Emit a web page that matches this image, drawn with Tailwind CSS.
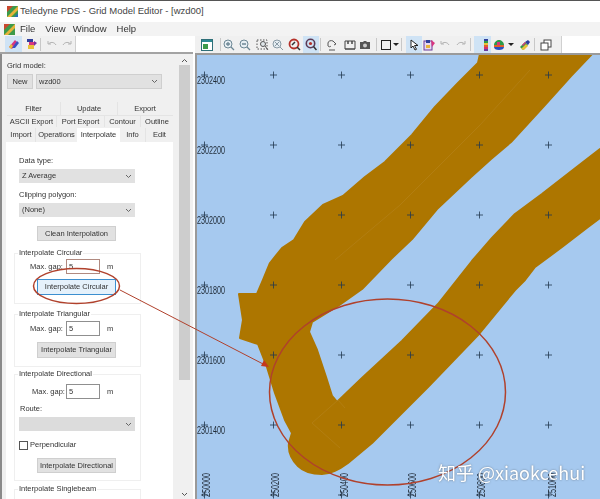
<!DOCTYPE html>
<html lang="en">
<head>
    <meta charset="UTF-8">
    <title>Teledyne PDS - Grid Model Editor - [wzd00]</title>
    <script src="https://cdn.jsdelivr.net/npm/@tailwindcss/browser@4"></script>
</head>
<body class="bg-white overflow-hidden">
<div class="relative w-[600px] h-[499px] overflow-hidden font-['Liberation_Sans',sans-serif] text-[#333] whitespace-nowrap blur-[0.35px]">

    <!-- Title bar -->
    <div class="h-[22px] bg-white border-t border-[#555] flex items-center pl-[7px] gap-[2px] text-[9.5px] text-[#444]">
        <svg class="w-[11px] h-[11px]" viewBox="0 0 11 11"><rect width="11" height="11" fill="#3c9a4a"/><path d="M0 11 11 0v4L4 11z" fill="#e8b33a"/><path d="M0 6 6 0H0z" fill="#c9482e"/><path d="M7 11l4-4v4z" fill="#2a6fb5"/></svg>
        <span>Teledyne PDS - Grid Model Editor - [wzd00]</span>
    </div>

    <!-- Menu -->
    <div class="h-[14px] bg-[#f3f3f3] flex items-center pl-[4px] text-[9.5px] text-[#333]">
        <svg class="w-[11px] h-[11px]" viewBox="0 0 11 11"><rect width="11" height="11" fill="#3c9a4a"/><path d="M0 11 11 0v4L4 11z" fill="#e8b33a"/><path d="M0 6 6 0H0z" fill="#c9482e"/></svg>
        <span class="ml-[5px]">File</span>
        <span class="ml-[10px]">View</span>
        <span class="ml-[7px]">Window</span>
        <span class="ml-[10px]">Help</span>
    </div>

    <div class="flex h-[463px]">
        <!-- Left side -->
        <div class="w-[193px] shrink-0 flex flex-col">
            <div class="h-[16px] bg-white border-b-2 border-[#a3a3a3] box-content flex items-center">
                <div class="flex items-center h-[16px] w-[76px] bg-[#f0f0f0] border-r border-[#d0d0d0]">
                    <div class="ml-[5px] w-[17px] h-[16px] bg-[#cfe3f5] flex items-center justify-center">
                        <svg class="w-[12px] h-[12px]" viewBox="0 0 12 12"><path d="M1 9 7 2l2 2-5 7z" fill="#d8357f"/><path d="M4 10l5-7 2 2-4 5z" fill="#3a4fc0"/><path d="M1 9l2-3 2 2-2 3z" fill="#e9b93a"/></svg>
                    </div>
                    <svg class="ml-[4px] w-[12px] h-[12px]" viewBox="0 0 12 12"><path d="M1 1h6v3H1z" fill="#2f3f9c"/><path d="M3 4h6v3H3z" fill="#d8357f"/><path d="M2 7h6v4H2z" fill="#e8c13a"/><path d="M8 3l3 2-3 3z" fill="#7a2f9c"/></svg>
                    <div class="ml-[2px] w-px h-[13px] bg-[#c8c8c8]"></div>
                    <svg class="ml-[6px] w-[10px] h-[9px]" viewBox="0 0 10 9" fill="none" stroke="#b4b4b4"><path d="M1 1v3h3M1.500 4C3 2 7 1.500 9 5"/></svg>
                    <svg class="ml-[5px] w-[10px] h-[9px]" viewBox="0 0 10 9" fill="none" stroke="#b4b4b4"><path d="M9 1v3H6M8.500 4C7 2 3 1.500 1 5"/></svg>
                </div>
            </div>

            <!-- Panel with scrollbar -->
            <div class="relative flex-1 bg-[#f0f0f0] border-l-2 border-[#8a8a8a] overflow-hidden pl-[5px]">
                <div class="pt-[6px] text-[7.5px] leading-[12px]">Grid model:</div>
                <div class="flex gap-[3px] mt-[2px] text-[7.5px]">
                    <button class="w-[26px] h-[15px] bg-[#e1e1e1] border border-[#cfcfcf]">New</button>
                    <div class="w-[126px] h-[15px] bg-[#e1e1e1] border border-[#cfcfcf] flex items-center justify-between px-[2px]">
                        <span>wzd00</span>
                        <svg class="w-[7px] h-[5px] mr-[1px]" viewBox="0 0 7 5" fill="none" stroke="#666"><path d="M1 1l2.500 2.500L6 1"/></svg>
                    </div>
                </div>

                <!-- Tabs -->
                <div class="w-[166px] mt-[13px] text-[7.5px] leading-[13px] text-center">
                    <div class="flex h-[13px] border-b border-[#e4e4e4] box-content">
                        <span class="w-[54px] border-r border-[#e4e4e4]">Filter</span>
                        <span class="w-[57px] border-r border-[#e4e4e4]">Update</span>
                        <span class="w-[54px]">Export</span>
                    </div>
                    <div class="flex h-[12px] -mt-px">
                        <span class="w-[50px] border-r border-[#e4e4e4]">ASCII Export</span>
                        <span class="w-[48px] border-r border-[#e4e4e4]">Port Export</span>
                        <span class="w-[36px] border-r border-[#e4e4e4]">Contour</span>
                        <span class="w-[32px]">Outline</span>
                    </div>
                    <div class="flex h-[14px] mt-[1px]">
                        <span class="w-[29px] border-r border-[#e4e4e4]">Import</span>
                        <span class="w-[41px]">Operations</span>
                        <span class="w-[43px] bg-white">Interpolate</span>
                        <span class="w-[26px] border-r border-[#e4e4e4]">Info</span>
                        <span class="w-[27px]">Edit</span>
                    </div>
                </div>

                <!-- Interpolate tab -->
                <div class="w-[167px] -ml-px bg-white h-[360px] text-[7.5px] leading-[12px] pt-[13px] pl-[8px]">
                    <div class="pl-[5px]">
                        <div>Data type:</div>
                        <div class="w-[116px] h-[14px] mt-[2px] bg-[#e1e1e1] flex items-center justify-between px-[3px]">
                            <span>Z Average</span>
                            <svg class="w-[7px] h-[5px]" viewBox="0 0 7 5" fill="none" stroke="#666"><path d="M1 1l2.500 2.500L6 1"/></svg>
                        </div>
                        <div class="mt-[6px]">Clipping polygon:</div>
                        <div class="w-[116px] h-[14px] mt-[2px] bg-[#e1e1e1] flex items-center justify-between px-[3px]">
                            <span>(None)</span>
                            <svg class="w-[7px] h-[5px]" viewBox="0 0 7 5" fill="none" stroke="#666"><path d="M1 1l2.500 2.500L6 1"/></svg>
                        </div>
                        <button class="block w-[79px] h-[15px] ml-[18px] mt-[9px] bg-[#e1e1e1] border border-[#cfcfcf]">Clean Interpolation</button>
                    </div>

                    <fieldset class="w-[127px] h-[57px] mt-[6px] border border-[#efefef]">
                        <legend class="ml-[3px] px-[1px]">Interpolate Circular</legend>
                        <div class="flex items-center h-[15px] pl-[15px]">
                            <span class="w-[36px]">Max. gap:</span>
                            <div class="w-[34px] h-[15px] border border-[#b08a80] pl-[2px] leading-[13px]">5</div>
                            <span class="ml-[7px]">m</span>
                        </div>
                        <button class="block w-[79px] h-[16px] ml-[22px] mt-[5px] bg-[#e5f1fb] border border-[#3c8fd0]">Interpolate Circular</button>
                    </fieldset>

                    <fieldset class="w-[127px] h-[59px] mt-[4px] border border-[#efefef]">
                        <legend class="ml-[3px] px-[1px]">Interpolate Triangular</legend>
                        <div class="flex items-center h-[15px] mt-[1px] pl-[15px]">
                            <span class="w-[36px]">Max. gap:</span>
                            <div class="w-[34px] h-[15px] border border-[#8f8f8f] pl-[2px] leading-[13px]">5</div>
                            <span class="ml-[7px]">m</span>
                        </div>
                        <button class="block w-[79px] h-[16px] ml-[22px] mt-[6px] bg-[#e1e1e1] border border-[#cfcfcf]">Interpolate Triangular</button>
                    </fieldset>

                    <fieldset class="w-[127px] h-[113px] mt-[1px] border border-[#efefef]">
                        <legend class="ml-[3px] px-[1px]">Interpolate Directional</legend>
                        <div class="flex items-center h-[15px] mt-[4px] pl-[17px]">
                            <span class="w-[34px]">Max. gap:</span>
                            <div class="w-[34px] h-[15px] border border-[#8f8f8f] pl-[2px] leading-[13px]">5</div>
                            <span class="ml-[7px]">m</span>
                        </div>
                        <div class="mt-[4px] pl-[5px]">Route:</div>
                        <div class="w-[116px] h-[14px] mt-[2px] ml-[4px] bg-[#dcdcdc] flex items-center justify-end px-[3px]">
                            <svg class="w-[7px] h-[5px]" viewBox="0 0 7 5" fill="none" stroke="#666"><path d="M1 1l2.500 2.500L6 1"/></svg>
                        </div>
                        <div class="flex items-center mt-[8px] ml-[4px]">
                            <span class="w-[9px] h-[9px] border border-[#555]"></span>
                            <span class="ml-[2px]">Perpendicular</span>
                        </div>
                        <button class="block w-[79px] h-[15px] ml-[22px] mt-[7px] bg-[#e1e1e1] border border-[#cfcfcf]">Interpolate Directional</button>
                    </fieldset>

                    <fieldset class="w-[127px] h-[30px] mt-[2px] border border-[#efefef]">
                        <legend class="ml-[3px] px-[1px]">Interpolate Singlebeam</legend>
                    </fieldset>
                </div>

                <!-- Scrollbar -->
                <div class="absolute right-[3px] top-0 bottom-0 w-[11px] flex flex-col items-center">
                    <svg class="mt-[4px] w-[7px] h-[5px]" viewBox="0 0 7 5" fill="none" stroke="#555"><path d="M1 4l2.500-2.500L6 4"/></svg>
                    <div class="mt-[2px] w-[11px] h-[315px] bg-[#cdcdcd]"></div>
                    <svg class="mt-auto mb-[2px] w-[7px] h-[5px]" viewBox="0 0 7 5" fill="none" stroke="#555"><path d="M1 1l2.500 2.500L6 1"/></svg>
                </div>
            </div>
        </div>

        <div class="w-[2px] bg-white shrink-0"></div>

        <!-- Right side -->
        <div class="flex-1 flex flex-col min-w-0">
            <div class="h-[17px] bg-white flex shrink-0">
                <div class="w-[367px] bg-[#f0f0f0] border-r border-[#d0d0d0] flex items-center">
                    <svg class="ml-[6px] w-[12px] h-[12px]" viewBox="0 0 12 12"><rect x=".5" y=".5" width="11" height="11" fill="#fff" stroke="#2e6f78"/><rect x="1" y="1" width="10" height="2" fill="#2e8a94"/><rect x="2" y="5" width="5" height="5" fill="#3c9a4a"/></svg>
                    <div class="ml-[7px] w-px h-[13px] bg-[#c8c8c8]"></div>
                    <svg class="ml-[2px] w-[12px] h-[12px]" viewBox="0 0 12 12" fill="none" stroke="#6d8795"><circle cx="5" cy="5" r="4" fill="#e6eef3"/><path d="M8 8l3 3M5 3v4M3 5h4" stroke-width="1.300"/></svg>
                    <svg class="ml-[4px] w-[12px] h-[12px]" viewBox="0 0 12 12" fill="none" stroke="#6d8795"><circle cx="5" cy="5" r="4" fill="#e6eef3"/><path d="M8 8l3 3M3 5h4" stroke-width="1.300"/></svg>
                    <svg class="ml-[5px] w-[13px] h-[12px]" viewBox="0 0 13 12" fill="none" stroke="#555"><rect x="1" y="1" width="10" height="9" stroke-dasharray="1.500 1.500"/><circle cx="7" cy="5" r="2.500" fill="#dfe6ea"/><path d="M9 7l3 4"/></svg>
                    <svg class="ml-[3px] w-[12px] h-[12px]" viewBox="0 0 12 12" fill="none" stroke="#8a9aa5"><circle cx="5" cy="5" r="4" fill="#e6eef3"/><path d="M8 8l3 3M3 3l4 4M7 3 3 7"/></svg>
                    <svg class="ml-[4px] w-[13px] h-[13px]" viewBox="0 0 13 13" fill="none"><circle cx="6" cy="6" r="4.500" stroke="#b5322a" stroke-width="1.800"/><path d="M9 9l3 3M4 7l3-3" stroke="#333" stroke-width="1.500"/></svg>
                    <div class="ml-[2px] w-[16px] h-[17px] bg-[#cfe3f5] flex items-center justify-center">
                        <svg class="w-[12px] h-[13px]" viewBox="0 0 12 13" fill="none"><circle cx="5.500" cy="5.500" r="4.200" stroke="#5a3a55" stroke-width="1.600"/><circle cx="5.500" cy="5.500" r="1.600" fill="#b5322a"/><path d="M8.500 8.500l3 3.500" stroke="#333" stroke-width="1.500"/></svg>
                    </div>
                    <div class="ml-[1px] w-px h-[13px] bg-[#c8c8c8]"></div>
                    <svg class="ml-[5px] w-[12px] h-[12px]" viewBox="0 0 12 12" fill="none" stroke="#555"><path d="M2 7V4c0-2 3-3 5-2l3 3-2 1M2 7c1 1 2 1 3 0M3 11h6"/></svg>
                    <svg class="ml-[6px] w-[12px] h-[10px]" viewBox="0 0 12 10" fill="none" stroke="#444"><path d="M1 9V1h10v8zM1 9h10"/><path d="M4 1v3M8 1v3" stroke-width="1.500"/></svg>
                    <svg class="ml-[3px] w-[12px] h-[10px]" viewBox="0 0 12 10"><path d="M1 2h3l1-1h2l1 1h3v7H1z" fill="#555"/><circle cx="6" cy="5.500" r="2" fill="#ccc"/></svg>
                    <div class="ml-[5px] w-px h-[13px] bg-[#c8c8c8]"></div>
                    <div class="ml-[4px] w-[10px] h-[10px] border-[1.500px] border-[#222]"></div>
                    <div class="ml-[2px] w-0 h-0 border-x-[3px] border-x-transparent border-t-[3px] border-t-[#222]"></div>
                    <div class="ml-[2px] w-px h-[13px] bg-[#c8c8c8]"></div>
                    <div class="ml-[4px] w-[16px] h-[17px] bg-[#cfe3f5] flex items-center justify-center">
                        <svg class="w-[9px] h-[12px]" viewBox="0 0 9 12" fill="#fff" stroke="#222"><path d="M1 1v8l2-2 2 4 1.500-.7L4.500 6.500H8z"/></svg>
                    </div>
                    <svg class="ml-[1px] w-[13px] h-[12px]" viewBox="0 0 13 12"><rect x="1" y="2" width="8" height="9" fill="#e8d9f0" stroke="#6a3b9c"/><rect x="3" y="6" width="4" height="3" fill="#e8b33a"/><path d="M8 1l4 3-3 4z" fill="#d8357f"/><path d="M3 1h4v3H3z" fill="#2f3f9c"/></svg>
                    <svg class="ml-[4px] w-[10px] h-[9px]" viewBox="0 0 10 9" fill="none" stroke="#b4b4b4"><path d="M1 1v3h3M1.500 4C3 2 7 1.500 9 5"/></svg>
                    <svg class="ml-[6px] w-[10px] h-[9px]" viewBox="0 0 10 9" fill="none" stroke="#b4b4b4"><path d="M9 1v3H6M8.500 4C7 2 3 1.500 1 5"/></svg>
                    <div class="ml-[4px] w-px h-[13px] bg-[#c8c8c8]"></div>
                    <div class="ml-[3px] w-[17px] h-[17px] bg-[#cfe3f5] flex items-center justify-end pr-[2px]">
                        <svg class="w-[6px] h-[12px]" viewBox="0 0 6 12"><rect x="1" y="0" width="4" height="2" fill="#2f3f9c"/><rect x="1" y="2" width="4" height="2" fill="#2c9a4a"/><rect x="1" y="4" width="4" height="2" fill="#e8c13a"/><rect x="1" y="6" width="4" height="2" fill="#e0602a"/><rect x="1" y="8" width="4" height="2" fill="#d32f6f"/><rect x="1" y="10" width="4" height="2" fill="#6a3b9c"/></svg>
                    </div>
                    <svg class="ml-[2px] w-[12px] h-[12px]" viewBox="0 0 12 12"><path d="M1 6c0-3 3-5 5-5s5 2 5 5z" fill="#2c9a4a"/><path d="M1 6h10v2H1z" fill="#e0602a"/><path d="M1 8h10c0 2-2 3-5 3S1 10 1 8z" fill="#2a4fc0"/><path d="M4 3h3v3H4z" fill="#d8357f"/></svg>
                    <div class="ml-[3px] w-0 h-0 border-x-[3px] border-x-transparent border-t-[3px] border-t-[#222]"></div>
                    <svg class="ml-[5px] w-[12px] h-[12px]" viewBox="0 0 12 12"><path d="M1 8l5-5 3 3-5 5z" fill="#2c9a4a"/><path d="M2 10l5-5 2 2-4 4z" fill="#e8c13a"/><path d="M6 3l3-2 2 2-2 3z" fill="#2a3f9c"/><path d="M3 6l3-3 1 1-3 3z" fill="#d8357f"/></svg>
                    <div class="ml-[3px] w-px h-[13px] bg-[#c8c8c8]"></div>
                    <svg class="ml-[5px] w-[12px] h-[12px]" viewBox="0 0 12 12" fill="#fff" stroke="#444"><rect x="4" y="1" width="7" height="7"/><rect x="1" y="4" width="7" height="7"/></svg>
                </div>
            </div>

            <!-- Map canvas -->
            <div class="relative flex-1 bg-[#a6c9ef] border-l-2 border-t-2 border-[#9a9a9a] overflow-hidden">
                <svg class="absolute left-[-2px] top-[-55px] w-[600px] h-[499px] -ml-[195px]" viewBox="0 0 600 499" style="overflow:visible">
                    <path fill="#ad7600" stroke="#ad7600" stroke-width="2" stroke-linejoin="round" d="M480 54 478 63 458 83 435 107 412 135 385 162 365 177 343 196 323 205 305 222 294 240 282 248 270 263 263 280 257 294 239 294 243 320 240 338 258 344 267 367 275 393 285 420 292 433 289 443C288 452 292 460 298 466 304 472 312 474 322 474 332 474 340 469 348 463L372 443 398 417 428 387 478 335 515 290 525 280 535 267 562 247 588 227 600 218V149L578 166 542 194 515 214 492 238 472 261 438 304 402 341 362 378 337 402 332 396 326 377 317 350 309 332 312 322 338 306 362 289 391 259 412 239 437 209 471 177 491 159 511 142 544 106 571 76 592 54z"/>
                    <path fill="none" stroke="#b98a2a" stroke-width=".6" opacity=".7" d="M335 260 400 205 480 125 530 70M312 423 338 400 345 408M312 423 340 448"/>
                    <g stroke="#22384f" stroke-width=".8" fill="none">
                        <path d="M201 75h7M204.500 71.500v7M270 75h7M273.500 71.500v7M338 75h7M341.500 71.500v7M407 75h7M410.500 71.500v7M476 75h7M479.500 71.500v7M545 75h7M548.500 71.500v7"/>
                        <path d="M201 145h7M204.500 141.500v7M270 145h7M273.500 141.500v7M338 145h7M341.500 141.500v7M407 145h7M410.500 141.500v7M476 145h7M479.500 141.500v7M545 145h7M548.500 141.500v7"/>
                        <path d="M201 215h7M204.500 211.500v7M270 215h7M273.500 211.500v7M338 215h7M341.500 211.500v7M407 215h7M410.500 211.500v7M476 215h7M479.500 211.500v7M545 215h7M548.500 211.500v7"/>
                        <path d="M201 285h7M204.500 281.500v7M270 285h7M273.500 281.500v7M338 285h7M341.500 281.500v7M407 285h7M410.500 281.500v7M476 285h7M479.500 281.500v7M545 285h7M548.500 281.500v7"/>
                        <path d="M201 355h7M204.500 351.500v7M270 355h7M273.500 351.500v7M338 355h7M341.500 351.500v7M407 355h7M410.500 351.500v7M476 355h7M479.500 351.500v7M545 355h7M548.500 351.500v7"/>
                        <path d="M201 425h7M204.500 421.500v7M270 425h7M273.500 421.500v7M338 425h7M341.500 421.500v7M407 425h7M410.500 421.500v7M476 425h7M479.500 421.500v7M545 425h7M548.500 421.500v7"/>
                        <path d="M201 495h7M204.500 491.500v7M270 495h7M273.500 491.500v7M338 495h7M341.500 491.500v7M407 495h7M410.500 491.500v7M476 495h7M479.500 491.500v7M545 495h7M548.500 491.500v7"/>
                    </g>
                    <g fill="#1f2a36" font-family="Liberation Sans, sans-serif" font-size="10">
                        <text x="197" y="83.500" textLength="28" lengthAdjust="spacingAndGlyphs">2302400</text>
                        <text x="197" y="153.500" textLength="28" lengthAdjust="spacingAndGlyphs">2302200</text>
                        <text x="197" y="223.500" textLength="28" lengthAdjust="spacingAndGlyphs">2302000</text>
                        <text x="197" y="293.500" textLength="28" lengthAdjust="spacingAndGlyphs">2301800</text>
                        <text x="197" y="363.500" textLength="28" lengthAdjust="spacingAndGlyphs">2301600</text>
                        <text x="197" y="433.500" textLength="28" lengthAdjust="spacingAndGlyphs">2301400</text>
                        <text transform="translate(210 497) rotate(-90)" textLength="24" lengthAdjust="spacingAndGlyphs">250000</text>
                        <text transform="translate(279 497) rotate(-90)" textLength="24" lengthAdjust="spacingAndGlyphs">250200</text>
                        <text transform="translate(348 497) rotate(-90)" textLength="24" lengthAdjust="spacingAndGlyphs">250400</text>
                        <text transform="translate(416 497) rotate(-90)" textLength="24" lengthAdjust="spacingAndGlyphs">250600</text>
                        <text transform="translate(485 497) rotate(-90)" textLength="24" lengthAdjust="spacingAndGlyphs">250800</text>
                        <text transform="translate(556 497) rotate(-90)" textLength="24" lengthAdjust="spacingAndGlyphs">251000</text>
                    </g>
                </svg>
            </div>
        </div>
    </div>

    <!-- Annotation drawn over the screenshot -->
    <svg class="absolute left-0 top-0 w-[600px] h-[499px] pointer-events-none" viewBox="0 0 600 499" fill="none" stroke="#b0412c">
        <ellipse cx="76.500" cy="286" rx="43" ry="17.500" stroke-width="1.500"/>
        <ellipse cx="387.500" cy="392" rx="118" ry="93" stroke-width="1.500"/>
        <path d="M120 290 265 365" stroke-width="1"/>
        <path d="M269 367 261 366 264 360z" fill="#c4391d" stroke="none"/>
    </svg>

    <div class="absolute left-[438px] top-[460px] text-white text-[18px] leading-[24px] font-['Noto_Sans_CJK_SC',sans-serif] [text-shadow:0_0_2px_rgba(60,60,60,0.6)]">知乎 @xiaokcehui</div>
</div>
</body>
</html>
